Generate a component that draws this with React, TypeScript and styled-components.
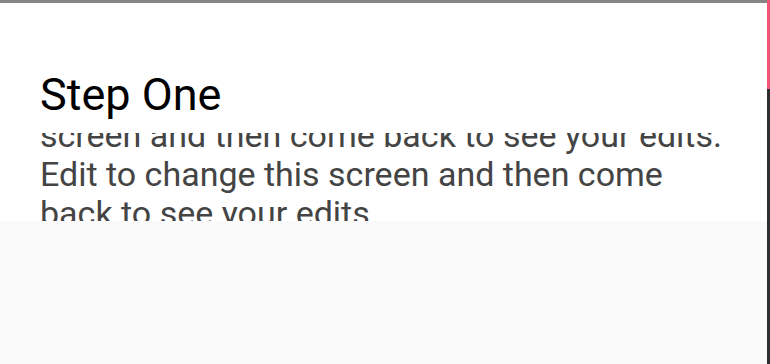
import { createGlobalStyle, styled } from "styled-components";

const GlobalStyle = createGlobalStyle`
  html, body {
    margin: 0;
    padding: 0;
    background: #ffffff;
  }
  body {
    font-family: Roboto, "Noto Sans", sans-serif;
  }
`;

const description =
  "Edit to change this screen and then come back to see your edits. ".repeat(3).trim();

export default function App(): JSX.Element {
  return (
    <>
      <GlobalStyle />
      <Frame>
        <Main>
          <Content>
            <Title>Step One</Title>
            <ScrollBox>
              <Description>{description}</Description>
            </ScrollBox>
          </Content>
          <Footer />
        </Main>
        <EdgeStrip>
          <EdgeAccent />
          <EdgeRest />
        </EdgeStrip>
      </Frame>
    </>
  );
}

const Frame = styled.div`
  display: flex;
  width: 770px;
  height: 364px;
  overflow: hidden;
`;

const Main = styled.div`
  display: flex;
  flex-direction: column;
  flex: 1;
  border-top: 3px solid #858585;
`;

const Content = styled.div`
  display: flex;
  flex-direction: column;
  height: 218px;
  padding: 0 0 0 40px;
  background: #ffffff;
`;

const Title = styled.h1`
  margin: 0;
  padding-top: 66px;
  font-size: 45px;
  line-height: 52px;
  font-weight: 400;
  color: #000000;
`;

const ScrollBox = styled.div`
  height: 88px;
  margin-top: 12px;
  overflow: hidden;
  width: 692px;
`;

const Description = styled.p`
  margin: -95px 0 0;
  font-size: 34px;
  line-height: 39px;
  color: #444444;
`;

const Footer = styled.div`
  flex: 1;
  background: #fafafa;
`;

const EdgeStrip = styled.div`
  display: flex;
  flex-direction: column;
  width: 3px;
`;

const EdgeAccent = styled.div`
  height: 89px;
  background: #f2577a;
`;

const EdgeRest = styled.div`
  flex: 1;
  background: #2e2e2e;
`;
